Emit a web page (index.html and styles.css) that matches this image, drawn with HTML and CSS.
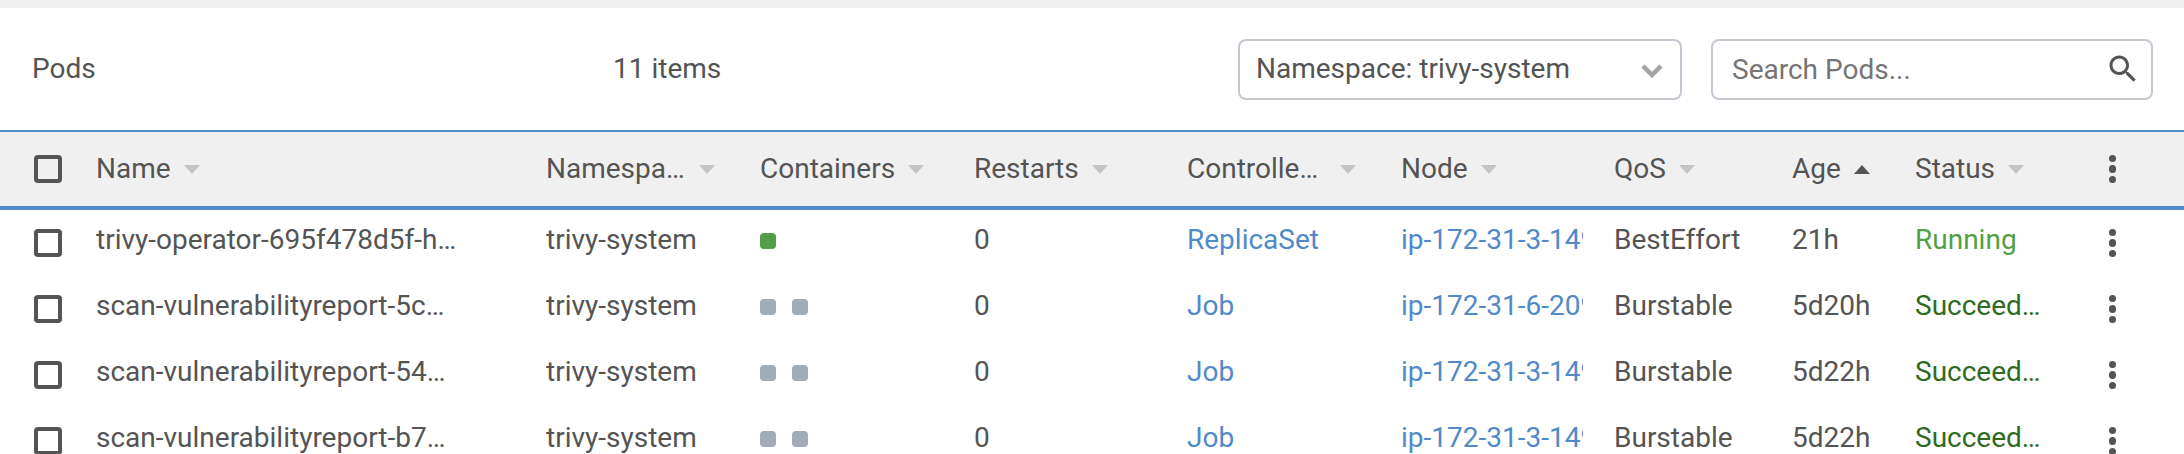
FILE: index.html
```html
<!DOCTYPE html>
<html lang="en">
<head>
<meta charset="utf-8">
<title>Pods</title>
<link rel="stylesheet" href="styles.css">
</head>
<body>
<div class="topbar"></div>
<div class="toolbar">
  <div class="title">Pods</div>
  <div class="count">11 items</div>
  <div class="select">
    <span>Namespace: trivy-system</span>
    <svg class="chevron" viewBox="0 0 22 14"><path d="M2 2l9 9 9-9" fill="none" stroke="#a3a3a3" stroke-width="4.5"/></svg>
  </div>
  <div class="search">
    <input class="search-input" placeholder="Search Pods...">
    <svg class="search-icon" viewBox="0 0 24 24"><path fill="#545454" d="M15.5 14h-.79l-.28-.27C15.41 12.59 16 11.11 16 9.5 16 5.91 13.09 3 9.5 3S3 5.91 3 9.5 5.91 16 9.5 16c1.61 0 3.09-.59 4.23-1.57l.27.28v.79l5 4.99L20.49 19l-4.99-5zm-6 0C7.01 14 5 11.99 5 9.5S7.01 5 9.5 5 14 7.01 14 9.5 11.99 14 9.5 14z"/></svg>
  </div>
</div>
<div class="table">
  <div class="row head">
    <div class="check"></div>
    <div class="th"><span class="label">Name</span><i class="arrow"></i></div>
    <div class="th"><span class="label">Namespace</span><i class="arrow"></i></div>
    <div class="th"><span class="label">Containers</span><i class="arrow"></i></div>
    <div class="th"><span class="label">Restarts</span><i class="arrow"></i></div>
    <div class="th"><span class="label">Controlled By</span><i class="arrow"></i></div>
    <div class="th"><span class="label">Node</span><i class="arrow"></i></div>
    <div class="th"><span class="label">QoS</span><i class="arrow"></i></div>
    <div class="th"><span class="label">Age</span><i class="arrow up"></i></div>
    <div class="th"><span class="label">Status</span><i class="arrow"></i></div>
    <div class="kebab"><b></b><b></b><b></b></div>
  </div>
  <div class="row">
    <div class="check"></div>
    <div class="td name">trivy-operator-695f478d5f-hvq7x</div>
    <div class="td">trivy-system</div>
    <div class="td dots"><i class="dot green"></i></div>
    <div class="td">0</div>
    <div class="td link">ReplicaSet</div>
    <div class="td link node">ip-172-31-3-149.us-west-2.compute.internal</div>
    <div class="td">BestEffort</div>
    <div class="td">21h</div>
    <div class="td status running">Running</div>
    <div class="kebab"><b></b><b></b><b></b></div>
  </div>
  <div class="row">
    <div class="check"></div>
    <div class="td name">scan-vulnerabilityreport-5cd8f7b9-x2k4p</div>
    <div class="td">trivy-system</div>
    <div class="td dots"><i class="dot"></i><i class="dot"></i></div>
    <div class="td">0</div>
    <div class="td link">Job</div>
    <div class="td link node">ip-172-31-6-209.us-west-2.compute.internal</div>
    <div class="td">Burstable</div>
    <div class="td">5d20h</div>
    <div class="td status done">Succeeded</div>
    <div class="kebab"><b></b><b></b><b></b></div>
  </div>
  <div class="row">
    <div class="check"></div>
    <div class="td name">scan-vulnerabilityreport-54d9c7d6b-m8n2t</div>
    <div class="td">trivy-system</div>
    <div class="td dots"><i class="dot"></i><i class="dot"></i></div>
    <div class="td">0</div>
    <div class="td link">Job</div>
    <div class="td link node">ip-172-31-3-149.us-west-2.compute.internal</div>
    <div class="td">Burstable</div>
    <div class="td">5d22h</div>
    <div class="td status done">Succeeded</div>
    <div class="kebab"><b></b><b></b><b></b></div>
  </div>
  <div class="row">
    <div class="check"></div>
    <div class="td name">scan-vulnerabilityreport-b7d4e8c5f-q9w3z</div>
    <div class="td">trivy-system</div>
    <div class="td dots"><i class="dot"></i><i class="dot"></i></div>
    <div class="td">0</div>
    <div class="td link">Job</div>
    <div class="td link node">ip-172-31-3-149.us-west-2.compute.internal</div>
    <div class="td">Burstable</div>
    <div class="td">5d22h</div>
    <div class="td status done">Succeeded</div>
    <div class="kebab"><b></b><b></b><b></b></div>
  </div>
</div>
</body>
</html>
```
FILE: styles.css
```css
* { box-sizing: border-box; }
html, body { margin: 0; height: 454px; overflow: hidden; background: #fff; }
body { font-family: Roboto, "Liberation Sans", sans-serif; font-size: 28px; color: #545454; }
.topbar { height: 8px; background: #f0f0f0; }
.toolbar { height: 122px; display: flex; align-items: center; padding: 0 31px 0 32px; }
.title { width: 581px; padding-bottom: 2px; }
.count { padding-bottom: 2px; }
.select, .search {
  height: 61px; margin-top: 1px; border: 2px solid #c4c8d0; border-radius: 8px;
  display: flex; align-items: center; justify-content: space-between;
}
.select { width: 444px; margin-left: auto; padding: 0 17px 2px 16px; }
.chevron { width: 22px; height: 14px; margin-top: 4px; }
.search { width: 442px; margin-left: 29px; padding: 0 10px 0 19px; }
.search-input {
  flex: 1; min-width: 0; border: 0; outline: 0; padding: 0; background: transparent;
  font: inherit; color: inherit;
}
.search-input::placeholder { color: #757575; opacity: 1; }
.search-icon { width: 36px; height: 36px; margin-top: -2px; }
.table { display: block; }
.row {
  height: 66px; display: grid; align-items: center; padding-left: 34px;
  grid-template-columns: 62px 450px 214px 214px 213px 214px 213px 178px 123px 182px 32px;
}
.head { height: 80px; background: #f0f0f0; border-top: 2px solid #5189c9; border-bottom: 4px solid #5189c9; }
.check { width: 28px; height: 28px; border: 4px solid #545454; border-radius: 4px; }
.th { display: flex; align-items: center; min-width: 0; }
.label { max-width: 140px; padding-bottom: 2px; white-space: nowrap; overflow: hidden; text-overflow: ellipsis; }
.arrow {
  flex: none; margin-left: 13px; width: 0; height: 0;
  border-left: 8.5px solid transparent; border-right: 8.5px solid transparent;
  border-top: 9px solid #c4c4c4;
}
.arrow.up { border-top: 0; border-bottom: 9px solid #545454; }
.td { min-width: 0; padding-right: 10px; padding-bottom: 8px; white-space: nowrap; overflow: hidden; text-overflow: ellipsis; }
.name { width: 363px; padding-right: 0; }
.link { color: #5189c9; }
.node { width: 182px; padding-right: 0; text-overflow: clip; }
.status { width: 128px; padding-right: 0; }
.running { color: #52a046; }
.done { color: #2f6b1f; }
.dots { display: flex; gap: 16px; overflow: visible; padding-bottom: 4px; }
.dot { width: 16px; height: 16px; border-radius: 4px; background: #a1acb6; }
.dot.green { background: #52a046; }
.kebab { width: 8px; margin-left: 12px; display: flex; flex-direction: column; gap: 3.5px; }
.kebab b { display: block; width: 7.3px; height: 7.3px; border-radius: 50%; background: #545454; }
```
